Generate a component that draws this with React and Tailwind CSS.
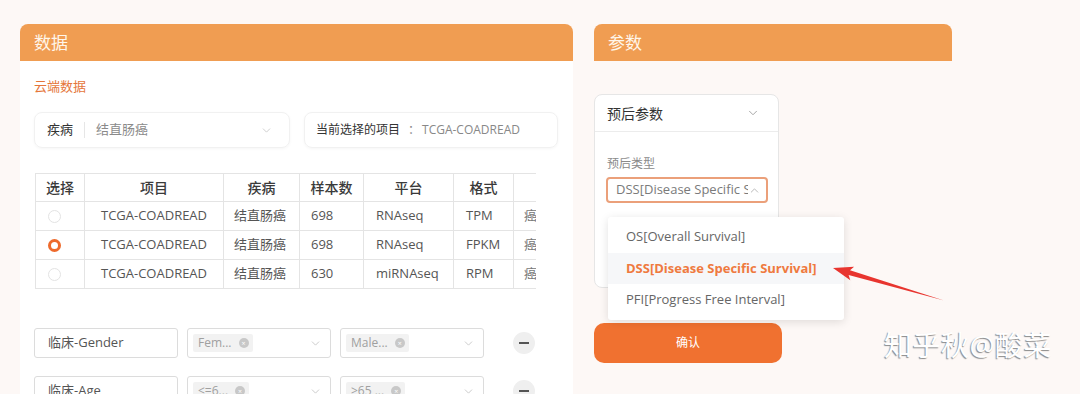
import { ChevronDown, ChevronUp } from 'lucide-react'

const FONT = "font-['Open_Sans','Noto_Sans_CJK_SC',sans-serif]"

const rows = [
  { sel: false, fmt: 'TPM', n: '698', plat: 'RNAseq' },
  { sel: true, fmt: 'FPKM', n: '698', plat: 'RNAseq' },
  { sel: false, fmt: 'RPM', n: '630', plat: 'miRNAseq' },
]

const cols = [49, 139, 76, 64, 90, 60, 80]

function Radio({ on }) {
  return on ? (
    <span className="block w-[13px] h-[13px] rounded-full border-[3px] border-[#ee6a2c] bg-white" />
  ) : (
    <span className="block w-[13px] h-[13px] rounded-full border border-[#e3e3e3] bg-white" />
  )
}

function Tag({ label }) {
  return (
    <span className="inline-flex items-center gap-[7px] h-[18px] bg-[#f2f2f2] rounded-[2px] pl-[5px] pr-[4px] text-[12px] text-[#a0a0a0]">
      {label}
      <span className="w-[10px] h-[10px] rounded-full bg-[#c8c8c8] flex items-center justify-center text-[7px] leading-none text-white">×</span>
    </span>
  )
}

function FilterRow({ name, a, b }) {
  return (
    <div className="flex items-center h-[30px]">
      <div className="w-[144px] h-[30px] border border-[#dcdcdc] rounded-[3px] flex items-center pl-[13px] text-[13px] text-[#555]">{name}</div>
      <div className="ml-[9px] w-[144px] h-[30px] border border-[#dcdcdc] rounded-[3px] flex items-center pl-[5px] pr-[8px] justify-between">
        <Tag label={a} />
        <ChevronDown size={13} strokeWidth={1.5} className="text-[#c0c0c0]" />
      </div>
      <div className="ml-[9px] w-[144px] h-[30px] border border-[#dcdcdc] rounded-[3px] flex items-center pl-[5px] pr-[8px] justify-between">
        <Tag label={b} />
        <ChevronDown size={13} strokeWidth={1.5} className="text-[#c0c0c0]" />
      </div>
      <div className="ml-[29px] w-[22px] h-[22px] rounded-full bg-[#efefef] flex items-center justify-center">
        <span className="block w-[10px] h-[2px] bg-[#555]" />
      </div>
    </div>
  )
}

function Table() {
  return (
    <div className="w-[501px] overflow-hidden">
      <table className="table-fixed border-collapse w-[558px] text-[13px]">
        <colgroup>
          {cols.map((w, i) => <col key={i} style={{ width: w }} />)}
        </colgroup>
        <thead>
          <tr className="h-[28px]">
            {['选择', '项目', '疾病', '样本数', '平台', '格式', ''].map((h, i) => (
              <th key={i} className="border border-[#e4e4e4] font-medium text-[14px] text-[#3a3a3a] text-center">{h}</th>
            ))}
          </tr>
        </thead>
        <tbody className="text-[#555]">
          {rows.map((r, i) => (
            <tr key={i} className="h-[29px]">
              <td className="border border-[#e4e4e4] pl-[12px]"><Radio on={r.sel} /></td>
              <td className="border border-[#e4e4e4] text-center">TCGA-COADREAD</td>
              <td className="border border-[#e4e4e4] pl-[10px]">结直肠癌</td>
              <td className="border border-[#e4e4e4] pl-[11px]">{r.n}</td>
              <td className="border border-[#e4e4e4] pl-[12px]">{r.plat}</td>
              <td className="border border-[#e4e4e4] pl-[12px]">{r.fmt}</td>
              <td className="border border-[#e4e4e4] pl-[10px] text-[#777] whitespace-nowrap">癌</td>
            </tr>
          ))}
        </tbody>
      </table>
    </div>
  )
}

export default function App() {
  return (
    <div className={`relative w-[1080px] h-[394px] overflow-hidden bg-[#fdf8f6] flex pl-[20px] pt-[24px] ${FONT}`}>
      {/* 数据 */}
      <div className="w-[553px] flex flex-col">
        <div className="h-[37px] shrink-0 bg-[#f09d52] rounded-t-[8px] flex items-center px-[14px] text-[17px] text-[#fff6ea]">数据</div>
        <div className="flex-1 bg-white px-[14px]">
          <div className="mt-[16px] text-[13px] leading-[18px] text-[#e5763a]">云端数据</div>

          <div className="mt-[17px] flex gap-[14px]">
            <div className="w-[256px] h-[36px] rounded-[8px] border border-[#f1f1f1] shadow-[0_1px_3px_rgba(0,0,0,0.04)] flex items-center pl-[12px] pr-[16px] text-[13px]">
              <span className="text-[#333]">疾病</span>
              <span className="mx-[11px] w-px h-[16px] bg-[#e6e6e6]" />
              <span className="text-[#8a8a8a] flex-1">结直肠癌</span>
              <ChevronDown size={13} strokeWidth={1.5} className="text-[#c4c4c4]" />
            </div>
            <div className="w-[254px] h-[36px] rounded-[8px] border border-[#f1f1f1] shadow-[0_1px_3px_rgba(0,0,0,0.04)] flex items-center pl-[11px] text-[12px]">
              <span className="text-[#333]">当前选择的项目</span>
              <span className="ml-[8px] text-[#888]">：</span>
              <span className="ml-[2px] text-[#888]">TCGA-COADREAD</span>
            </div>
          </div>

          <div className="mt-[25px] ml-px">
            <Table />
          </div>

          <div className="mt-[39px] flex flex-col gap-[18px]">
            <FilterRow name="临床-Gender" a="Fem..." b="Male..." />
            <FilterRow name="临床-Age" a="<=6..." b=">65 ..." />
          </div>
        </div>
      </div>

      {/* 参数 */}
      <div className="ml-[21px] w-[358px] flex flex-col relative">
        <div className="h-[37px] shrink-0 bg-[#f09d52] rounded-t-[8px] flex items-center px-[14px] text-[17px] text-[#fff6ea]">参数</div>
        <div className="mt-[33px] w-[185px] h-[194px] rounded-[8px] border border-[#e6e6e6] bg-white">
          <div className="h-[37px] border-b border-[#ececec] flex items-center justify-between pl-[12px] pr-[18px]">
            <span className="text-[14px] text-[#333]">预后参数</span>
            <ChevronDown size={14} strokeWidth={1.5} className="text-[#999]" />
          </div>
          <div className="mt-[24px] pl-[12px] text-[12px] leading-[16px] text-[#8a8a8a]">预后类型</div>
          <div className="mt-[5px] ml-[11px] w-[162px] h-[26px] rounded-[4px] border-2 border-[#eba07a] flex items-center pl-[8px] pr-[5px]">
            <span className="flex-1 overflow-hidden whitespace-nowrap text-[13px] text-[#7a7a7a]">DSS[Disease Specific Survival]</span>
            <ChevronUp size={13} strokeWidth={1.5} className="text-[#aaa] shrink-0" />
          </div>
        </div>
        <button className="mt-[35px] w-[188px] h-[40px] rounded-[10px] bg-[#f07130] text-white text-[12px]">确认</button>

        <div className="absolute left-[14px] top-[193px] w-[236px] py-[4px] bg-white shadow-[0_2px_10px_rgba(0,0,0,0.12)] rounded-[3px] text-[13px]">
          <div className="h-[32px] flex items-center pl-[18px] text-[#666]">OS[Overall Survival]</div>
          <div className="h-[31px] flex items-center pl-[18px] bg-[#f6f7f9] font-bold text-[#ef7a3f]">DSS[Disease Specific Survival]</div>
          <div className="h-[32px] flex items-center pl-[18px] text-[#666]">PFI[Progress Free Interval]</div>
        </div>
      </div>

      {/* annotation arrow */}
      <svg className="absolute left-0 top-0 pointer-events-none" width="1080" height="394">
        <polygon points="833,268 854.1,266.8 850,270.3 944,300.5 848.6,275.1 850.3,280.2" fill="#e8352f" />
      </svg>

      {/* watermark */}
      <div className="absolute left-[884px] top-[328px] text-[28px] leading-[34px] tracking-[0.5px] text-white [text-shadow:-1px_1px_1px_#8a8a8a]">
        知乎秋@酸菜
      </div>
    </div>
  )
}
